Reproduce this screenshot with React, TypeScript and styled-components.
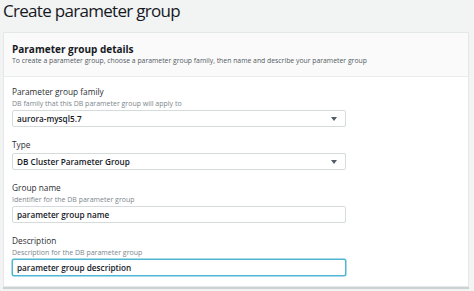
import * as React from "react";
import styled, { createGlobalStyle } from "styled-components";

const GlobalStyle = createGlobalStyle`
  html, body {
    margin: 0;
    padding: 0;
    background: #f2f3f3;
    font-family: "Open Sans", "Noto Sans", Arial, sans-serif;
    color: #16191f;
  }
`;

const Page = styled.div`
  width: 474px;
  height: 291px;
  overflow: hidden;
  padding: 0 5px 0 3px;
  box-sizing: border-box;
`;

const PageTitle = styled.h1`
  margin: 0;
  height: 32px;
  font-size: 17px;
  line-height: 21px;
  font-weight: 400;
  letter-spacing: -0.7px;
  color: #16191f;
`;

const Card = styled.div`
  background: #ffffff;
  border: 1px solid #e4e8e8;
  box-shadow: 0 2px 0 #ccd2d2;
`;

const CardHeader = styled.div`
  background: #fafafa;
  border-bottom: 1px solid #eaeded;
  height: 44px;
  padding: 10px 8px 0;
  box-sizing: border-box;
`;

const CardTitle = styled.div`
  font-size: 10px;
  line-height: 13px;
  font-weight: 700;
  color: #16191f;
`;

const CardSubtitle = styled.div`
  font-size: 6.85px;
  line-height: 10px;
  color: #545b64;
`;

const CardBody = styled.div`
  display: flex;
  flex-direction: column;
  gap: 12px;
  padding: 9px 8px 10px;
`;

const Field = styled.div`
  display: flex;
  flex-direction: column;
  width: 334px;
`;

const Label = styled.div`
  font-size: 8.3px;
  line-height: 12px;
  color: #2a2e33;
`;

const Hint = styled.div`
  margin-top: 1px;
  font-size: 7px;
  line-height: 9px;
  color: #7d868c;
`;

const Control = styled.div<{ $focused?: boolean }>`
  margin-top: 2px;
  height: 17px;
  box-sizing: border-box;
  display: flex;
  align-items: center;
  justify-content: space-between;
  padding: 0 8px 0 4px;
  background: #ffffff;
  border: 1px solid ${(p) => (p.$focused ? "#4fb6d3" : "#d5dbdb")};
  border-radius: 2px;
  box-shadow: ${(p) => (p.$focused ? "0 0 0 0.5px #4fb6d3" : "none")};
  font-size: 8.2px;
  font-weight: 600;
  color: #16191f;
`;

const Caret = styled.span`
  width: 0;
  height: 0;
  border-left: 3px solid transparent;
  border-right: 3px solid transparent;
  border-top: 4px solid #545b64;
`;

interface FormFieldProps {
  label: string;
  hint?: string;
  value: string;
  select?: boolean;
  focused?: boolean;
}

function FormField({ label, hint, value, select, focused }: FormFieldProps) {
  return (
    <Field>
      <Label>{label}</Label>
      {hint && <Hint>{hint}</Hint>}
      <Control $focused={focused}>
        <span>{value}</span>
        {select && <Caret />}
      </Control>
    </Field>
  );
}

export default function App() {
  return (
    <Page>
      <GlobalStyle />
      <PageTitle>Create parameter group</PageTitle>
      <Card>
        <CardHeader>
          <CardTitle>Parameter group details</CardTitle>
          <CardSubtitle>
            To create a parameter group, choose a parameter group family, then name and describe your parameter group
          </CardSubtitle>
        </CardHeader>
        <CardBody>
          <FormField
            label="Parameter group family"
            hint="DB family that this DB parameter group will apply to"
            value="aurora-mysql5.7"
            select
          />
          <FormField label="Type" value="DB Cluster Parameter Group" select />
          <FormField
            label="Group name"
            hint="Identifier for the DB parameter group"
            value="parameter group name"
          />
          <FormField
            label="Description"
            hint="Description for the DB parameter group"
            value="parameter group description"
            focused
          />
        </CardBody>
      </Card>
    </Page>
  );
}
